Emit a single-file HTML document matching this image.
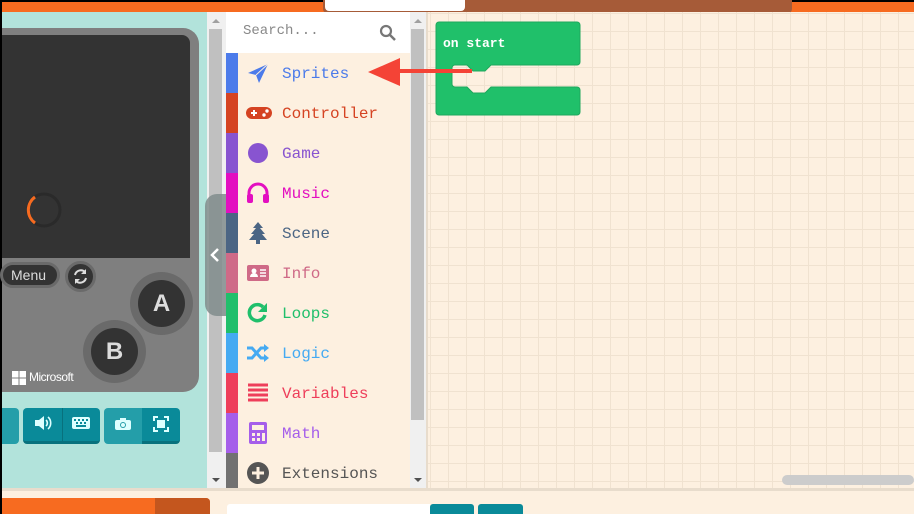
<!DOCTYPE html>
<html><head><style>
*{margin:0;padding:0;box-sizing:border-box}
body{width:914px;height:514px;overflow:hidden;background:#000;position:relative;font-family:"Liberation Mono",monospace}
.a{position:absolute}
.cat{position:absolute;left:226px;width:184px;height:40px}
.cat .s{position:absolute;left:0;top:0;width:12px;height:40px}
.cat .t{position:absolute;left:56px;top:11px;font-size:16px;line-height:20px}
.cat svg{position:absolute;left:20px;top:8px}
</style></head><body>
<div class="a" style="left:2px;top:2px;width:912px;height:10px;background:#f76b20"></div>
<div class="a" style="left:323px;top:0;width:469px;height:13px;background:#a65b38;border-radius:0 0 4px 4px"></div>
<div class="a" style="left:325px;top:0;width:140px;height:11px;background:#fff;border-radius:0 0 4px 4px"></div>
<div class="a" style="left:2px;top:12px;width:206px;height:476px;background:#b2e3db"></div>
<div class="a" style="left:2px;top:28px;width:197px;height:364px;background:#7f7f7f;border-radius:0 16px 16px 0"></div>
<div class="a" style="left:2px;top:35px;width:188px;height:223px;background:#333;border-radius:0 8px 0 0"></div>
<svg class="a" style="left:25px;top:191px" width="40" height="40"><circle cx="19" cy="19" r="16" fill="none" stroke="#2a2a2a" stroke-width="3"/><path d="M10 32 A16 16 0 0 1 10 6" fill="none" stroke="#f76b20" stroke-width="3"/></svg>
<div class="a" style="left:0;top:262px;width:60px;height:26px;background:#333;border-radius:13px;border:3px solid #6a6a6a;color:#ddd;font:14px 'Liberation Sans',sans-serif;line-height:20px;padding-left:8px">Menu</div>
<svg class="a" style="left:65px;top:261px" width="31" height="31"><circle cx="15.5" cy="15.5" r="14" fill="#333" stroke="#6a6a6a" stroke-width="3"/><path d="M10 14a6 6 0 0110-3M21 17a6 6 0 01-10 3" fill="none" stroke="#ddd" stroke-width="2"/><path d="M21 8v5h-5zM10 23v-5h5z" fill="#ddd"/></svg>
<div class="a" style="left:130px;top:272px;width:63px;height:63px;border-radius:50%;background:#6a6a6a"></div>
<div class="a" style="left:138px;top:280px;width:47px;height:47px;border-radius:50%;background:#333;color:#ddd;font:bold 24px 'Liberation Sans',sans-serif;text-align:center;line-height:47px">A</div>
<div class="a" style="left:83px;top:320px;width:63px;height:63px;border-radius:50%;background:#6a6a6a"></div>
<div class="a" style="left:91px;top:328px;width:47px;height:47px;border-radius:50%;background:#333;color:#ddd;font:bold 24px 'Liberation Sans',sans-serif;text-align:center;line-height:47px">B</div>
<svg class="a" style="left:12px;top:371px" width="14" height="14"><rect x="0" y="0" width="6.5" height="6.5" fill="#fff"/><rect x="7.5" y="0" width="6.5" height="6.5" fill="#fff"/><rect x="0" y="7.5" width="6.5" height="6.5" fill="#fff"/><rect x="7.5" y="7.5" width="6.5" height="6.5" fill="#fff"/></svg>
<div class="a" style="left:29px;top:370px;color:#fff;font:12px 'Liberation Sans',sans-serif;letter-spacing:-0.5px">Microsoft</div>
<div class="a" style="left:2px;top:408px;width:17px;height:36px;background:#249ea9;border-radius:0 4px 4px 0"></div>
<div class="a" style="left:23px;top:408px;width:77px;height:36px;background:#0a8a99;border-radius:4px;border-bottom:3px solid #08717d"></div>
<div class="a" style="left:62px;top:408px;width:1px;height:36px;background:#08717d"></div>
<div class="a" style="left:104px;top:408px;width:38px;height:36px;background:#249ea9;border-radius:4px 0 0 4px"></div>
<div class="a" style="left:142px;top:408px;width:38px;height:36px;background:#0a8a99;border-radius:0 4px 4px 0;border-bottom:3px solid #08717d"></div>
<svg class="a" style="left:34px;top:415px" width="18" height="16"><path d="M1 5h4l5-4v14l-5-4H1z" fill="#dff"/><path d="M12 5a4 4 0 010 6M14 2a8 8 0 010 12" fill="none" stroke="#dff" stroke-width="1.6"/></svg>
<svg class="a" style="left:72px;top:417px" width="18" height="12"><rect width="18" height="12" rx="2" fill="#dff"/><g fill="#0a8a99"><rect x="2" y="2" width="2" height="2"/><rect x="6" y="2" width="2" height="2"/><rect x="10" y="2" width="2" height="2"/><rect x="14" y="2" width="2" height="2"/><rect x="4" y="5" width="2" height="2"/><rect x="8" y="5" width="2" height="2"/><rect x="12" y="5" width="2" height="2"/><rect x="4" y="8" width="10" height="2"/></g></svg>
<svg class="a" style="left:115px;top:417px" width="16" height="13"><rect y="3" width="16" height="10" rx="2" fill="#dff"/><rect x="5" y="1" width="6" height="3" fill="#dff"/><circle cx="8" cy="8" r="3" fill="#249ea9"/><circle cx="8" cy="8" r="2" fill="#dff"/></svg>
<svg class="a" style="left:153px;top:416px" width="16" height="16" fill="none" stroke="#dff" stroke-width="2"><path d="M1 5V1h4M11 1h4v4M15 11v4h-4M5 15H1v-4"/><rect x="4" y="4" width="8" height="8" fill="#dff" stroke="none"/></svg>
<div class="a" style="left:207px;top:12px;width:19px;height:476px;background:#f0f0f0"></div>
<div class="a" style="left:209px;top:29px;width:13px;height:423px;background:#c0c0c0"></div>
<div class="a" style="left:212px;top:19px;border:4px solid transparent;border-bottom-color:#a0a0a0;border-top:0"></div>
<div class="a" style="left:212px;top:478px;border:4px solid transparent;border-top-color:#505050;border-bottom:0"></div>
<div class="a" style="left:205px;top:194px;width:23px;height:122px;background:rgba(128,140,140,.85);border-radius:12px 0 0 12px"></div>
<svg class="a" style="left:209px;top:247px" width="12" height="16"><path d="M9 2L3 8l6 6" fill="none" stroke="#fff" stroke-width="2.5"/></svg>
<div class="a" style="left:226px;top:12px;width:200px;height:476px;background:#fdf0e0"></div>
<div class="a" style="left:226px;top:12px;width:184px;height:41px;background:#fff"></div>
<div class="a" style="left:243px;top:23px;color:#888;font-size:14px">Search...</div>
<svg class="a" style="left:379px;top:24px" width="18" height="18"><circle cx="7" cy="7" r="5" fill="none" stroke="#777" stroke-width="2.2"/><path d="M11 11l5 5" stroke="#777" stroke-width="2.5"/></svg>
<div class="cat" style="top:53px"><div class="s" style="background:#4c7bea"></div><svg width="24" height="24"><path d="M22 3L2 12l8 2 3 8z" fill="#4c7bea"/><path d="M22 3L10 14" stroke="#fdf0e0" stroke-width="1"/></svg><div class="t" style="color:#4c7bea">Sprites</div></div>
<div class="cat" style="top:93px"><div class="s" style="background:#d54322"></div><svg width="26" height="24"><rect x="0" y="6" width="26" height="12" rx="6" fill="#d54322"/><path d="M5 12h6M8 9v6" stroke="#fff" stroke-width="2"/><circle cx="18" cy="14" r="1.7" fill="#fff"/><circle cx="21" cy="10" r="1.7" fill="#fff"/></svg><div class="t" style="color:#d54322">Controller</div></div>
<div class="cat" style="top:133px"><div class="s" style="background:#8854d0"></div><svg width="24" height="24"><circle cx="12" cy="12" r="10" fill="#8854d0"/></svg><div class="t" style="color:#8854d0">Game</div></div>
<div class="cat" style="top:173px"><div class="s" style="background:#e30fc0"></div><svg width="24" height="24"><path d="M3 18v-6a9 9 0 0118 0v6" fill="none" stroke="#e30fc0" stroke-width="3"/><rect x="1" y="13" width="6" height="9" rx="2" fill="#e30fc0"/><rect x="17" y="13" width="6" height="9" rx="2" fill="#e30fc0"/></svg><div class="t" style="color:#e30fc0">Music</div></div>
<div class="cat" style="top:213px"><div class="s" style="background:#4b6584"></div><svg width="24" height="24"><path d="M12 1l5 6h-3l5 6h-3l5 6H3l5-6H5l5-6H7z" fill="#4b6584"/><rect x="10" y="19" width="4" height="4" fill="#4b6584"/></svg><div class="t" style="color:#4b6584">Scene</div></div>
<div class="cat" style="top:253px"><div class="s" style="background:#cf6a87"></div><svg width="24" height="24"><rect x="1" y="4" width="22" height="16" rx="2" fill="#cf6a87"/><circle cx="8" cy="10" r="2.5" fill="#fff"/><path d="M4 16a4 4 0 018 0z" fill="#fff"/><path d="M14 9h6M14 12h6M14 15h6" stroke="#fff" stroke-width="1.5"/></svg><div class="t" style="color:#cf6a87">Info</div></div>
<div class="cat" style="top:293px"><div class="s" style="background:#20bf6b"></div><svg width="24" height="24"><path d="M19 14a8 8 0 11-2-8" fill="none" stroke="#20bf6b" stroke-width="3.5"/><path d="M21 2v9h-9z" fill="#20bf6b"/></svg><div class="t" style="color:#20bf6b">Loops</div></div>
<div class="cat" style="top:333px"><div class="s" style="background:#45aaf2"></div><svg width="24" height="24"><path d="M1 7h5l9 10h4M1 17h5l9-10h4" fill="none" stroke="#45aaf2" stroke-width="3"/><path d="M18 3l5 4-5 4zM18 13l5 4-5 4z" fill="#45aaf2"/></svg><div class="t" style="color:#45aaf2">Logic</div></div>
<div class="cat" style="top:373px"><div class="s" style="background:#ee3e5a"></div><svg width="24" height="24"><path d="M2 4h20M2 9h20M2 14h20M2 19h20" stroke="#ee3e5a" stroke-width="3"/></svg><div class="t" style="color:#ee3e5a">Variables</div></div>
<div class="cat" style="top:413px"><div class="s" style="background:#a55eea"></div><svg width="24" height="24"><rect x="3" y="1" width="18" height="22" rx="2" fill="#a55eea"/><rect x="6" y="4" width="12" height="5" fill="#fdf0e0"/><g fill="#fdf0e0"><rect x="6" y="12" width="3" height="3"/><rect x="11" y="12" width="3" height="3"/><rect x="6" y="17" width="3" height="3"/><rect x="11" y="17" width="3" height="3"/><rect x="16" y="12" width="3" height="8"/></g></svg><div class="t" style="color:#a55eea">Math</div></div>
<div class="cat" style="top:453px;height:35px"><div class="s" style="background:#717171;height:35px"></div><svg width="24" height="24"><circle cx="12" cy="12" r="11" fill="#555"/><path d="M12 6v12M6 12h12" stroke="#fdf0e0" stroke-width="3"/></svg><div class="t" style="color:#555">Extensions</div></div>
<div class="a" style="left:410px;top:12px;width:16px;height:476px;background:#f0f0f0"></div>
<div class="a" style="left:411px;top:29px;width:13px;height:391px;background:#c0c0c0"></div>
<div class="a" style="left:414px;top:19px;border:4px solid transparent;border-bottom-color:#a0a0a0;border-top:0"></div>
<div class="a" style="left:414px;top:478px;border:4px solid transparent;border-top-color:#505050;border-bottom:0"></div>
<div class="a" style="left:426px;top:12px;width:488px;height:476px;background-color:#fdf0e0;background-image:linear-gradient(to right,#f0e2d0 1px,transparent 1px),linear-gradient(to bottom,#f0e2d0 1px,transparent 1px);background-size:18px 18px;background-position:2px 1px;border-left:2px solid #e8dccc"></div>
<div class="a" style="left:782px;top:475px;width:132px;height:10px;background:#ccc;border-radius:5px"></div>
<svg class="a" style="left:435px;top:21px" width="147" height="96"><path d="M4 1H142a3 3 0 0 1 3 3V41a3 3 0 0 1-3 3H56l-6 6H38l-6-6H20a3 3 0 0 0-3 3V63a3 3 0 0 0 3 3H32l6 6h12l6-6H142a3 3 0 0 1 3 3V91a3 3 0 0 1-3 3H4a3 3 0 0 1-3-3V4a3 3 0 0 1 3-3z" fill="#20c06a" stroke="#1ea85d"/></svg>
<div class="a" style="left:443px;top:36px;color:#fff;font-size:13px;font-weight:bold">on start</div>
<svg class="a" style="left:365px;top:58px" width="110" height="30"><path d="M107 13H30" stroke="#f44336" stroke-width="4"/><path d="M3 14l32-14v28z" fill="#f44336"/></svg>
<div class="a" style="left:2px;top:488px;width:912px;height:26px;background:#fdf0e0;border-top:3px solid #e8dccc"></div>
<div class="a" style="left:2px;top:498px;width:208px;height:16px;background:#f76b20;border-radius:0 4px 0 0"></div>
<div class="a" style="left:155px;top:498px;width:55px;height:16px;background:#c4561e;border-radius:0 4px 0 0"></div>
<div class="a" style="left:227px;top:504px;width:203px;height:10px;background:#fff;border-radius:3px 0 0 0"></div>
<div class="a" style="left:430px;top:504px;width:44px;height:10px;background:#0a8a99;border-radius:3px 3px 0 0"></div>
<div class="a" style="left:478px;top:504px;width:45px;height:10px;background:#0a8a99;border-radius:3px 3px 0 0"></div>
</body></html>
